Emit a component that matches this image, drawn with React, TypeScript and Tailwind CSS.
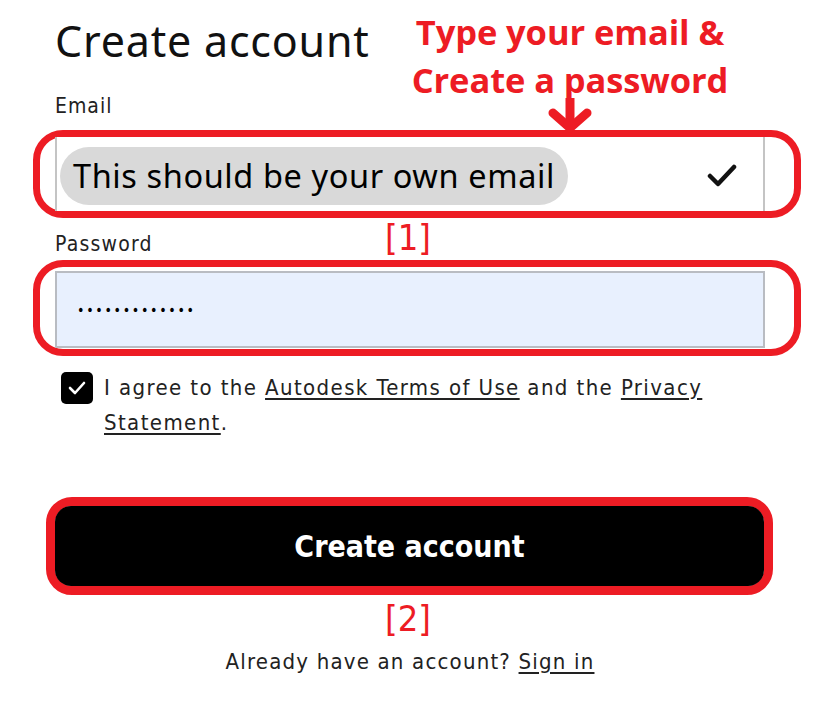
import React from "react";

export default function App() {
  return (
    <div className="relative w-[835px] h-[727px] bg-white overflow-hidden">
      {/* annotation text */}
      <div className="absolute left-[403px] top-[8px] w-[334px] text-center text-[#ed1c24] font-bold text-[34.5px] leading-[48px] tracking-[-0.1px]" style={{ fontFamily: '"Open Sans", sans-serif' }}>
        <div>Type your email &amp;</div>
        <div>Create a password</div>
      </div>
      <svg className="absolute left-[546px] top-[96px]" width="48" height="38" viewBox="0 0 48 38">
        <path d="M24 2 V32" stroke="#ed1c24" strokeWidth="9" fill="none" />
        <path d="M7 17 L24 32 L41 17" stroke="#ed1c24" strokeWidth="9" strokeLinecap="round" strokeLinejoin="round" fill="none" />
      </svg>

      <div className="pl-[33px] w-[801px] flex flex-col" style={{ fontFamily: '"DejaVu Sans Condensed", "DejaVu Sans", sans-serif' }}>
        <h1 className="pl-[22px] mt-[17px] text-[43px] leading-[48px] text-[#111] tracking-[0.8px]" style={{ fontFamily: '"Noto Sans", sans-serif', fontWeight: 400 }}>
          Create account
        </h1>
        <div className="pl-[22px] mt-[29px] text-[21px] leading-[24px] text-[#222] tracking-[1px]">Email</div>
        <div className="mt-[12px] h-[88px] border-[7px] border-[#ed1c24] rounded-[30px] pl-[15px] pr-[29px]">
          <div className="h-full border-l-2 border-r-2 border-[#c4c4c4] bg-white flex items-center pl-[3px] pr-[26px] pt-[4px]">
            <span className="h-[58px] flex items-center px-[13px] rounded-full bg-[#d9d9d9] text-[32.5px] text-black tracking-[0.6px]" style={{ fontFamily: '"Noto Sans", sans-serif' }}>
              This should be your own email
            </span>
            <svg className="ml-auto" width="30" height="26" viewBox="0 0 30 26">
              <path d="M3 13 L11 21 L27 4" stroke="#111" strokeWidth="4.5" strokeLinecap="round" strokeLinejoin="round" fill="none" />
            </svg>
          </div>
        </div>
        <div className="relative">
          <div className="absolute left-[352px] top-[0px] text-[36px] leading-[40px] text-[#ed1c24] font-extralight" style={{ fontFamily: '"DejaVu Sans Condensed", sans-serif' }}>[1]</div>
          <div className="pl-[22px] pt-[14px] text-[21px] leading-[24px] text-[#222] tracking-[1.2px]">Password</div>
        </div>
        <div className="mt-[4px] h-[96px] border-[7px] border-[#ed1c24] rounded-[30px] pl-[15px] pr-[29px] pt-[4px] pb-[1px]">
          <div className="h-full border-2 border-[#b9bcc2] bg-[#e8f0fe] flex items-center pl-[20px]">
            <span className="text-[14px] text-black tracking-[1.7px] leading-none">•••••••••••••</span>
          </div>
        </div>
        <div className="mt-[16px] pl-[28px] flex items-start gap-[11px]">
          <div className="w-[32px] h-[32px] shrink-0 rounded-[5px] bg-black flex items-center justify-center">
            <svg width="18" height="16" viewBox="0 0 18 16">
              <path d="M2 8 L7 13 L16 3" stroke="white" strokeWidth="2.6" strokeLinecap="round" strokeLinejoin="round" fill="none" />
            </svg>
          </div>
          <p className="text-[22px] leading-[35px] text-[#222] w-[640px] -mt-[2px] tracking-[1.4px]">
            I agree to the <span className="underline underline-offset-[3px]">Autodesk Terms of Use</span> and the <span className="underline underline-offset-[3px]">Privacy Statement</span>.
          </p>
        </div>
        <div className="ml-[13px] mt-[57px] w-[727px] h-[98px] border-[9px] border-[#ed1c24] rounded-[26px]">
          <button className="w-full h-full rounded-[16px] bg-black text-white text-[30px] font-bold tracking-[0px]" style={{ fontFamily: '"DejaVu Sans Condensed", sans-serif' }}>
            Create account
          </button>
        </div>
        <div className="relative h-[54px]">
          <div className="absolute left-[352px] top-[4px] text-[36px] leading-[40px] text-[#ed1c24] font-extralight" style={{ fontFamily: '"DejaVu Sans Condensed", sans-serif' }}>[2]</div>
        </div>
        <div className="pr-[14px] text-center text-[22px] leading-[26px] text-[#222] tracking-[1.2px]">
          Already have an account? <span className="underline underline-offset-[3px]">Sign in</span>
        </div>
      </div>
    </div>
  );
}
